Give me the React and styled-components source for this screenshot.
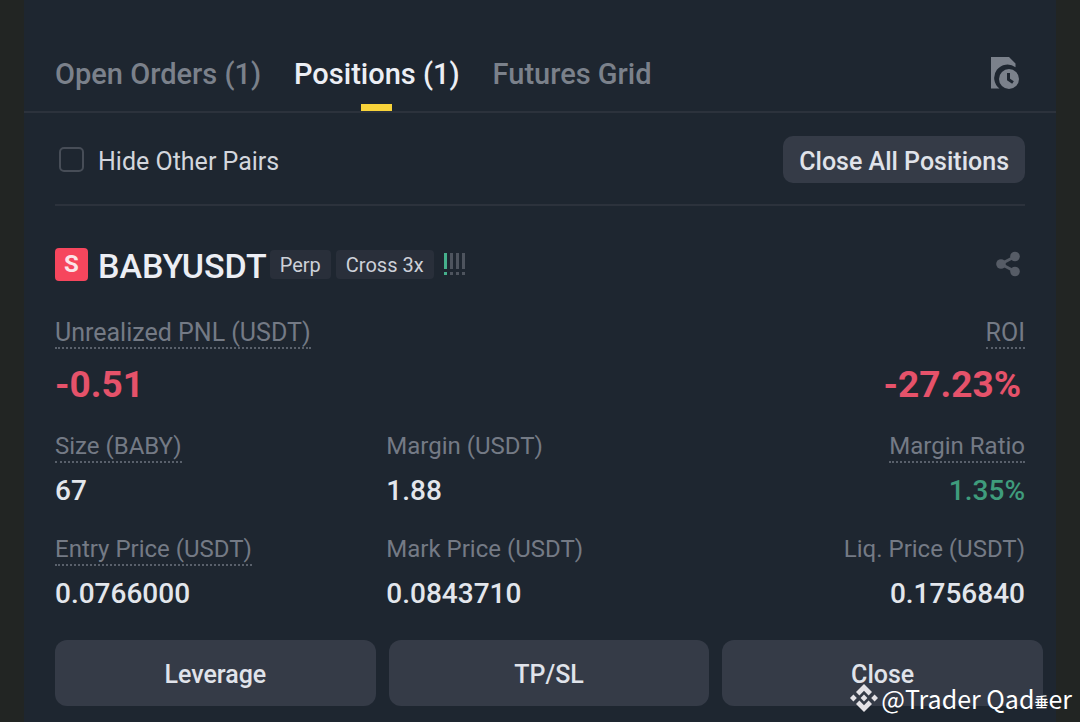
import React from "react";
import styled, { createGlobalStyle } from "styled-components";

const GlobalStyle = createGlobalStyle`
  *, *::before, *::after { box-sizing: border-box; }
  body {
    margin: 0;
    background: #222523;
    color: #e3e6ec;
    font-family: Roboto, "Liberation Sans", sans-serif;
  }
  button, input { font: inherit; color: inherit; }
`;

const Screen = styled.div`
  position: relative;
  min-height: 100vh;
  padding: 0 24px;
  overflow: hidden;
`;

const Panel = styled.main`
  min-height: 100vh;
  padding-bottom: 16px;
  background: #1e2630;
`;

const TabBar = styled.nav`
  display: flex;
  align-items: center;
  justify-content: space-between;
  padding: 36px 36px 0 31px;
  border-bottom: 2px solid #2c323c;
`;

const TabList = styled.div`
  display: flex;
  gap: 33px;
`;

const Tab = styled.button`
  position: relative;
  height: 75px;
  padding: 0;
  border: 0;
  background: none;
  color: ${(p) => (p.$active ? "#eceef4" : "#7b818b")};
  font-size: 29px;
  font-weight: 500;
  line-height: 77px;
  white-space: nowrap;

  &::after {
    content: "";
    display: ${(p) => (p.$active ? "block" : "none")};
    position: absolute;
    bottom: 0;
    left: 50%;
    width: 31px;
    height: 7px;
    margin-left: -16px;
    background: #f8d33a;
  }
`;

const IconButton = styled.button`
  display: flex;
  padding: 0;
  border: 0;
  background: none;
  color: ${(p) => p.$tone};
`;

const Content = styled.div`
  padding: 0 31px;
`;

const FilterRow = styled.div`
  display: flex;
  align-items: center;
  justify-content: space-between;
  height: 93px;
  padding-top: 2px;
  border-bottom: 2px solid #2c323c;
`;

const CheckLabel = styled.label`
  display: flex;
  align-items: flex-start;
  gap: 14px;
  margin-top: 4px;
  padding-left: 4px;
  font-size: 25px;
  line-height: 30px;
  color: #d3d6dd;
`;

const Checkbox = styled.input`
  appearance: none;
  width: 25px;
  height: 25px;
  margin: 0;
  border: 2px solid #474d57;
  border-radius: 5px;
`;

const Button = styled.button`
  height: ${(p) => (p.$large ? 66 : 47)}px;
  padding: ${(p) => (p.$large ? "2px 16px 0" : "4px 16px 0")};
  border: 0;
  border-radius: ${(p) => (p.$large ? 12 : 10)}px;
  background: #353b47;
  color: #e0e3ea;
  font-size: 25px;
  font-weight: 500;
  white-space: nowrap;
`;

const PositionHeader = styled.header`
  display: flex;
  align-items: center;
  height: 34px;
  margin-top: 41px;
  padding-right: 5px;
`;

const SideBadge = styled.span`
  width: 33px;
  height: 33px;
  border-radius: 4px;
  background: #f6465d;
  color: #fbe4e8;
  font-size: 24px;
  font-weight: 700;
  line-height: 33px;
  text-align: center;
`;

const Symbol = styled.h1`
  margin: 0 3px 0 10px;
  padding-top: 3px;
  color: #eceef4;
  font-size: 34px;
  font-weight: 500;
  line-height: 40px;
`;

const Tag = styled.span`
  height: 29px;
  margin-right: 5px;
  padding: 0 10px;
  border-radius: 4px;
  background: #292f3a;
  color: #cdd1d9;
  font-size: 20px;
  line-height: 31px;
`;

const Levels = styled.svg`
  margin: 0 auto 0 4px;
`;

const Stats = styled.dl`
  display: grid;
  grid-template-columns: repeat(${(p) => p.$columns}, 1fr);
  column-gap: 24px;
  margin: ${(p) => p.$top}px 0 0;
`;

const Stat = styled.div`
  display: flex;
  flex-direction: column;
  align-items: ${(p) => (p.$end ? "flex-end" : "flex-start")};
`;

const Term = styled.dt`
  height: 32px;
  border-bottom: 2px dotted ${(p) => (p.$hint ? "#59606b" : "transparent")};
  color: #747a85;
  font-size: ${(p) => (p.$large ? 25 : 24)}px;
  line-height: ${(p) => (p.$large ? 32 : 31)}px;
  white-space: nowrap;
`;

const tones = { plain: "#e3e6ec", loss: "#e5526a", gain: "#3f9c7c" };

const Value = styled.dd`
  margin: ${(p) => (p.$large ? 14 : 11)}px 0 0;
  padding-right: ${(p) => (p.$large ? 4 : 0)}px;
  color: ${(p) => tones[p.$tone]};
  font-size: ${(p) => (p.$large ? 37 : 28)}px;
  font-weight: ${(p) => (p.$large ? 700 : 500)};
  line-height: ${(p) => (p.$large ? 44 : 34)}px;
`;

const Actions = styled.div`
  display: grid;
  grid-template-columns: repeat(3, 1fr);
  gap: 13px;
  margin-top: 29px;
  padding: 0 13px 0 31px;
`;

const Watermark = styled.div`
  position: absolute;
  right: 8px;
  bottom: 4px;
  display: flex;
  align-items: center;
  gap: 3px;
  height: 40px;
  color: #ffffff;
  font-family: "Noto Sans CJK SC", "Noto Sans", sans-serif;
  font-size: 25px;
  line-height: 40px;
  white-space: nowrap;
`;

const SmallGlyph = styled.span`
  font-size: 14px;
  font-weight: 500;
  line-height: 14px;
  vertical-align: 2px;
`;

function HistoryIcon() {
  return (
    <svg width="30" height="34" viewBox="0 0 30 34" aria-hidden="true">
      <path d="M1 0h18l6.500 6.500v3.700A12.500 12.500 0 0 0 9.500 31.500H1z" fill="currentColor" />
      <circle cx="19" cy="22" r="10" fill="currentColor" />
      <path d="M18.500 16v6.500l4.500 3" fill="none" stroke="#1e2630" strokeWidth="3" />
    </svg>
  );
}

function ShareIcon() {
  return (
    <svg width="24" height="26" viewBox="0 0 24 26" aria-hidden="true">
      <path d="M19 5.500L5 13l14 7.500" fill="none" stroke="currentColor" strokeWidth="3" />
      <circle cx="19" cy="5.500" r="4.800" fill="currentColor" />
      <circle cx="5" cy="13" r="4.800" fill="currentColor" />
      <circle cx="19" cy="20.500" r="4.800" fill="currentColor" />
    </svg>
  );
}

function LevelMarks() {
  return (
    <Levels width="22" height="22" viewBox="0 0 22 22" aria-hidden="true">
      {[0, 6, 12, 18].map((x, i) => (
        <g key={x} fill={i === 0 ? "#45b08c" : "#4e545e"}>
          <rect x={x + 1} width="3" height="16" />
          <rect x={x + 1} y="19" width="3" height="3" />
        </g>
      ))}
    </Levels>
  );
}

function Logo() {
  return (
    <svg width="28" height="28" viewBox="0 0 28 28" fill="#e4e2e6" aria-hidden="true">
      <path d="M14 0l8 8-3.400 3.400L14 6.800l-4.600 4.600L6 8z" />
      <path d="M14 28l8-8-3.400-3.400-4.600 4.600-4.600-4.600L6 20z" />
      <path d="M14 10.600l3.400 3.400-3.400 3.400-3.400-3.400z" />
      <path d="M3.400 10.600L6.800 14l-3.400 3.400L0 14z" />
      <path d="M24.600 10.600L28 14l-3.400 3.400-3.400-3.400z" />
    </svg>
  );
}

const summary = [
  { label: "Unrealized PNL (USDT)", value: "-0.51", tone: "loss", hint: true },
  { label: "ROI", value: "-27.23%", tone: "loss", hint: true, end: true },
];

const details = [
  [
    { label: "Size (BABY)", value: "67", hint: true },
    { label: "Margin (USDT)", value: "1.88" },
    { label: "Margin Ratio", value: "1.35%", tone: "gain", hint: true, end: true },
  ],
  [
    { label: "Entry Price (USDT)", value: "0.0766000", hint: true },
    { label: "Mark Price (USDT)", value: "0.0843710" },
    { label: "Liq. Price (USDT)", value: "0.1756840", end: true },
  ],
];

function StatRow({ items, top, large }) {
  return (
    <Stats $columns={items.length} $top={top}>
      {items.map((s) => (
        <Stat key={s.label} $end={s.end}>
          <Term $hint={s.hint} $large={large}>{s.label}</Term>
          <Value $tone={s.tone || "plain"} $large={large}>{s.value}</Value>
        </Stat>
      ))}
    </Stats>
  );
}

export default function App() {
  return (
    <Screen>
      <GlobalStyle />
      <Panel>
        <TabBar>
          <TabList>
            <Tab>Open Orders (1)</Tab>
            <Tab $active>Positions (1)</Tab>
            <Tab>Futures Grid</Tab>
          </TabList>
          <IconButton $tone="#7b818b" aria-label="Order history">
            <HistoryIcon />
          </IconButton>
        </TabBar>
        <Content>
          <FilterRow>
            <CheckLabel>
              <Checkbox type="checkbox" />
              Hide Other Pairs
            </CheckLabel>
            <Button>Close All Positions</Button>
          </FilterRow>
          <PositionHeader>
            <SideBadge>S</SideBadge>
            <Symbol>BABYUSDT</Symbol>
            <Tag>Perp</Tag>
            <Tag>Cross 3x</Tag>
            <LevelMarks />
            <IconButton $tone="#565c66" aria-label="Share">
              <ShareIcon />
            </IconButton>
          </PositionHeader>
          <StatRow items={summary} top={36} large />
          <StatRow items={details[0]} top={24} />
          <StatRow items={details[1]} top={26} />
        </Content>
        <Actions>
          <Button $large>Leverage</Button>
          <Button $large>TP/SL</Button>
          <Button $large>Close</Button>
        </Actions>
      </Panel>
      <Watermark>
        <Logo />
        <span>
          @Trader Qad<SmallGlyph>垂</SmallGlyph>er
        </span>
      </Watermark>
    </Screen>
  );
}
